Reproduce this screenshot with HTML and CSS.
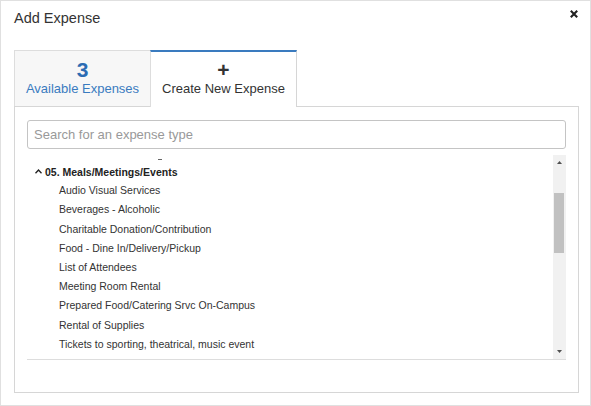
FILE: index.html
```html
<!DOCTYPE html>
<html lang="en">
<head>
<meta charset="utf-8">
<title>Add Expense</title>
<link rel="stylesheet" href="styles.css">
</head>
<body>
<div class="dialog">
  <div class="header">
    <h1 class="title">Add Expense</h1>
    <button class="close" type="button" aria-label="Close">
      <svg width="8" height="8" viewBox="0 0 8 8"><path d="M0.8 0.8 L7.2 7.2 M7.2 0.8 L0.8 7.2" stroke="#222" stroke-width="2.1" fill="none"/></svg>
    </button>
  </div>
  <div class="body">
    <div class="tabs">
      <div class="tab">
        <span class="tab-count">3</span>
        <span class="tab-label">Available Expenses</span>
      </div>
      <div class="tab active">
        <span class="tab-icon">+</span>
        <span class="tab-label">Create New Expense</span>
      </div>
    </div>
    <div class="panel">
      <input class="search" type="text" placeholder="Search for an expense type">
      <div class="list">
        <div class="list-items">
          <div class="peek"><span class="peek-dash"></span></div>
          <div class="group">
            <svg class="caret" width="7" height="5" viewBox="0 0 7 5"><polyline points="0.5,4.3 3.5,1 6.5,4.3" stroke="#222" stroke-width="1.3" fill="none"/></svg>
            <span>05. Meals/Meetings/Events</span>
          </div>
          <ul class="items">
            <li>Audio Visual Services</li>
            <li>Beverages - Alcoholic</li>
            <li>Charitable Donation/Contribution</li>
            <li>Food - Dine In/Delivery/Pickup</li>
            <li>List of Attendees</li>
            <li>Meeting Room Rental</li>
            <li>Prepared Food/Catering Srvc On-Campus</li>
            <li>Rental of Supplies</li>
            <li>Tickets to sporting, theatrical, music event</li>
          </ul>
        </div>
        <div class="scrollbar">
          <div class="sb-btn"><svg width="5" height="3" viewBox="0 0 5 3"><polygon points="0,3 2.5,0 5,3" fill="#505050"/></svg></div>
          <div class="sb-thumb"></div>
          <div class="sb-fill"></div>
          <div class="sb-btn"><svg width="5" height="3" viewBox="0 0 5 3"><polygon points="0,0 5,0 2.5,3" fill="#505050"/></svg></div>
        </div>
      </div>
    </div>
  </div>
</div>
</body>
</html>
```

FILE: styles.css
```css
html, body {
  margin: 0;
  padding: 0;
  background: #ffffff;
}

body {
  font-family: "Liberation Sans", Arial, sans-serif;
  color: #333333;
}

.dialog {
  box-sizing: border-box;
  width: 591px;
  height: 406px;
  border: 1px solid #e0e0e0;
  background: #ffffff;
}

.header {
  display: flex;
  justify-content: space-between;
  align-items: flex-start;
  padding: 9px 12px 0 13px;
  height: 17px;
}

.title {
  margin: 0;
  font-size: 14.5px;
  line-height: 17px;
  font-weight: normal;
  color: #333333;
}

.close {
  margin: 0;
  padding: 0;
  border: 0;
  background: transparent;
  width: 8px;
  height: 8px;
  display: block;
}

.close svg {
  display: block;
}

.body {
  padding: 23px 11px 0 13px;
}

.tabs {
  display: flex;
  align-items: flex-start;
  height: 56px;
}

.tab {
  box-sizing: border-box;
  display: flex;
  flex-direction: column;
  align-items: center;
  width: 136px;
  height: 56px;
  padding-top: 8px;
  border-top: 1px solid #dddddd;
  border-left: 1px solid #dddddd;
  background: #f7f7f7;
  color: #3a7bbf;
}

.tab.active {
  position: relative;
  z-index: 1;
  width: 147px;
  height: 57px;
  margin-bottom: -1px;
  padding-top: 7px;
  border-top: 2px solid #3a7bbf;
  border-right: 1px solid #d6d6d6;
  background: #ffffff;
  color: #333333;
}

.tab-count,
.tab-icon {
  font-size: 21px;
  line-height: 22px;
  font-weight: bold;
}

.tab-count {
  color: #2c6cb3;
}

.tab-icon {
  color: #333333;
}

.tab-label {
  font-size: 13px;
  line-height: 16px;
}

.panel {
  box-sizing: border-box;
  height: 287px;
  border: 1px solid #d6d6d6;
  padding: 13px 12px 0 12px;
}

.search {
  display: block;
  box-sizing: border-box;
  width: 100%;
  height: 29px;
  margin: 0;
  padding: 0 6px;
  border: 1px solid #c4c4c4;
  border-radius: 3px;
  font-family: "Liberation Sans", Arial, sans-serif;
  font-size: 13px;
  color: #333333;
  outline: none;
}

.search::placeholder {
  color: #999999;
}

.list {
  box-sizing: border-box;
  display: flex;
  height: 205px;
  margin-top: 6px;
  border-bottom: 1px solid #dddddd;
}

.list-items {
  flex: 1;
  overflow: hidden;
  font-size: 10.5px;
}

.peek {
  height: 3px;
}

.peek-dash {
  display: block;
  width: 4px;
  height: 1px;
  margin: 4px 0 0 131px;
  background: #666666;
}

.group {
  display: flex;
  align-items: center;
  height: 19.2px;
  padding-left: 8px;
  font-weight: bold;
  color: #222222;
}

.caret {
  display: block;
  margin-right: 3px;
}

.items {
  list-style: none;
  margin: 0;
  padding: 0 0 0 32px;
}

.items li {
  height: 19.2px;
  line-height: 19.2px;
  color: #333333;
  white-space: nowrap;
}

.scrollbar {
  display: flex;
  flex-direction: column;
  width: 13px;
  background: #f1f1f1;
}

.sb-btn {
  display: flex;
  align-items: center;
  justify-content: center;
  height: 15px;
}

.sb-btn svg {
  display: block;
}

.sb-thumb {
  height: 60px;
  margin: 23px 2px 0 1px;
  background: #c1c1c1;
}

.sb-fill {
  flex: 1;
}
```
